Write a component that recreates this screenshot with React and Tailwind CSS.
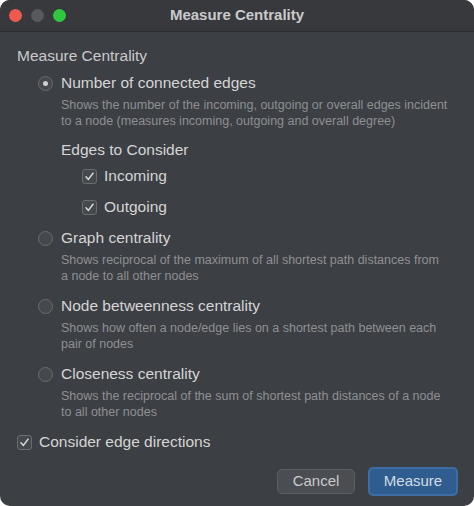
import React, { useState } from 'react';

const font = { fontFamily: '"Liberation Sans", "Inter", sans-serif' };

const Radio = ({ checked }) => (
  <span className="w-[15px] h-[15px] rounded-full border border-[#6a6c70] bg-[#45484c] flex items-center justify-center shrink-0">
    {checked && <span className="w-[5px] h-[5px] rounded-full bg-[#d0d0d0]" />}
  </span>
);

const Check = ({ checked }) => (
  <span className="w-[15px] h-[15px] rounded-[3px] border border-[#6a6c70] bg-[#45484c] flex items-center justify-center shrink-0">
    {checked && (
      <svg width="11" height="11" viewBox="0 0 11 11" fill="none">
        <path d="M2 5.8 L4.4 8.4 L9 2.2" stroke="#d8d8d8" strokeWidth="1.5" strokeLinecap="round" strokeLinejoin="round" />
      </svg>
    )}
  </span>
);

const Option = ({ label, desc, checked }) => (
  <div className="pl-[38px]">
    <div className="flex items-center gap-[8px] h-[20px]">
      <Radio checked={checked} />
      <span className="text-[15.5px] text-[#d4d5d6]">{label}</span>
    </div>
    <p className="ml-[23px] mt-[4px] w-[387px] text-[12.5px] leading-[16px] text-[#8e9093]">{desc}</p>
  </div>
);

export default function App() {
  const [opts] = useState([
    { label: 'Graph centrality', desc: 'Shows reciprocal of the maximum of all shortest path distances from a node to all other nodes' },
    { label: 'Node betweenness centrality', desc: 'Shows how often a node/edge lies on a shortest path between each pair of nodes' },
    { label: 'Closeness centrality', desc: 'Shows the reciprocal of the sum of shortest path distances of a node to all other nodes' },
  ]);

  return (
    <div className="w-[474px] h-[506px] bg-white" style={font}>
      <div className="w-full h-full rounded-[10px] bg-[#3c3f43] flex flex-col overflow-hidden">
        {/* title bar */}
        <div className="relative h-[32px] bg-[#38393c] border-b border-[#2c2d30] flex items-center shrink-0">
          <div className="flex gap-[9px] pl-[9px] -mt-[1px]">
            <span className="w-[13px] h-[13px] rounded-full bg-[#ee5a52]" />
            <span className="w-[13px] h-[13px] rounded-full bg-[#58595c]" />
            <span className="w-[13px] h-[13px] rounded-full bg-[#2dc840]" />
          </div>
          <div className="absolute inset-0 flex items-center justify-center text-[15px] font-bold text-[#c9cacb] -mt-[1px]">
            Measure Centrality
          </div>
        </div>

        <div className="flex-1 flex flex-col pt-[14px]">
          <div className="pl-[17px] text-[15.5px] text-[#c9cacc] h-[20px] leading-[20px]">Measure Centrality</div>

          <div className="mt-[7px]">
            <Option
              label="Number of connected edges"
              checked
              desc="Shows the number of the incoming, outgoing or overall edges incident to a node (measures incoming, outgoing and overall degree)"
            />
          </div>

          <div className="pl-[61px] mt-[11px] text-[15.5px] text-[#d4d5d6] h-[20px] leading-[20px]">Edges to Consider</div>
          <div className="pl-[82px] mt-[6px] flex flex-col gap-[11px]">
            <div className="flex items-center gap-[7px] h-[20px]">
              <Check checked />
              <span className="text-[15.5px] text-[#d4d5d6]">Incoming</span>
            </div>
            <div className="flex items-center gap-[7px] h-[20px]">
              <Check checked />
              <span className="text-[15.5px] text-[#d4d5d6]">Outgoing</span>
            </div>
          </div>

          <div className="mt-[11px] flex flex-col gap-[12px]">
            {opts.map(o => (
              <Option key={o.label} label={o.label} desc={o.desc} />
            ))}
          </div>

          <div className="pl-[17px] mt-[12px] flex items-center gap-[7px] h-[20px]">
            <Check checked />
            <span className="text-[15.5px] text-[#d4d5d6]">Consider edge directions</span>
          </div>

          <div className="flex justify-end gap-[13px] pr-[16px] mt-[17px]">
            <button className="w-[78px] h-[25px] rounded-[5px] bg-[#4a4d51] border border-[#5a5d61] text-[15px] text-[#c9cacc]">
              Cancel
            </button>
            <button className="w-[90px] h-[29px] -mt-[2px] rounded-[5px] bg-[#2f5d8f] border-2 border-[#3c6ea5] text-[15px] text-[#d4dbe4]">
              Measure
            </button>
          </div>
        </div>
      </div>
    </div>
  );
}
